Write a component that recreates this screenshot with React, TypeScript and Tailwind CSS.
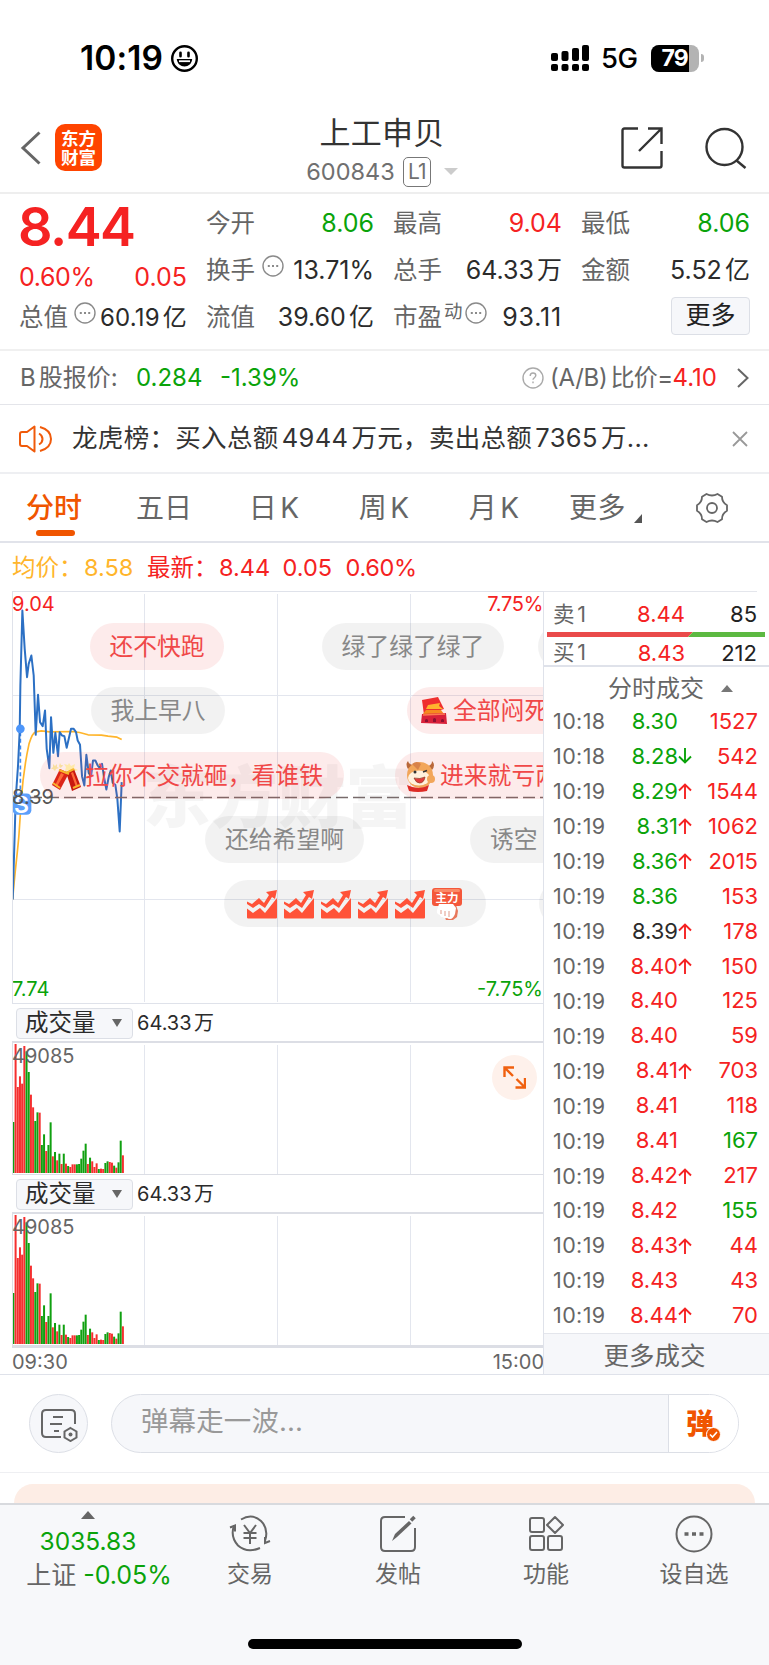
import type { ReactNode } from 'react'

const RED = 'text-[#f52222]'
const GREEN = 'text-[#0aa30a]'
const DARK = 'text-[#2b2b2b]'

const tabs = ['分时', '五日', '日K', '周K', '月K']

const trades = [
  { time: '10:18', price: '8.30', color: GREEN, dir: '', vol: '1527', volColor: RED },
  { time: '10:18', price: '8.28', color: GREEN, dir: 'down', vol: '542', volColor: RED },
  { time: '10:19', price: '8.29', color: GREEN, dir: 'up', vol: '1544', volColor: RED },
  { time: '10:19', price: '8.31', color: GREEN, dir: 'up', vol: '1062', volColor: RED },
  { time: '10:19', price: '8.36', color: GREEN, dir: 'up', vol: '2015', volColor: RED },
  { time: '10:19', price: '8.36', color: GREEN, dir: '', vol: '153', volColor: RED },
  { time: '10:19', price: '8.39', color: DARK, dir: 'up', vol: '178', volColor: RED },
  { time: '10:19', price: '8.40', color: RED, dir: 'up', vol: '150', volColor: RED },
  { time: '10:19', price: '8.40', color: RED, dir: '', vol: '125', volColor: RED },
  { time: '10:19', price: '8.40', color: RED, dir: '', vol: '59', volColor: RED },
  { time: '10:19', price: '8.41', color: RED, dir: 'up', vol: '703', volColor: RED },
  { time: '10:19', price: '8.41', color: RED, dir: '', vol: '118', volColor: RED },
  { time: '10:19', price: '8.41', color: RED, dir: '', vol: '167', volColor: GREEN },
  { time: '10:19', price: '8.42', color: RED, dir: 'up', vol: '217', volColor: RED },
  { time: '10:19', price: '8.42', color: RED, dir: '', vol: '155', volColor: GREEN },
  { time: '10:19', price: '8.43', color: RED, dir: 'up', vol: '44', volColor: RED },
  { time: '10:19', price: '8.43', color: RED, dir: '', vol: '43', volColor: RED },
  { time: '10:19', price: '8.44', color: RED, dir: 'up', vol: '70', volColor: RED },
]

// one entry per minute, r = up, g = down
const volumes =
  'g153 r387 r258 r290 r268 r381 g365 g303 r235 r197 g156 g182 r181 g84 g116 r66 g84 g152 r50 g63 r38 g58 r27 g58 r28 g21 r18 r26 r26 g26 g27 g43 g67 g88 r27 g46 r35 r18 r29 g12 r13 r12 g30 g35 r33 r31 g22 r16 g32 g97 r53'.split(' ')

const priceLine =
  '39,942 45,745 48,640 55,540 60,435 62,300 68,75 75,190 82,275 87,235 95,210 102,270 108,448 115,328 121,410 129,422 136,375 141,490 149,548 154,395 161,502 167,442 175,512 180,440 187,450 194,452 201,487 214,430 222,430 229,440 234,465 241,478 247,572 254,600 260,508 267,562 274,572 280,525 287,525 294,540 300,548 307,535 313,575 320,612 327,575 333,555 339,592 347,598 353,640 360,738 366,590'

const avgLine =
  'M39 942 C45 860 54 800 58 745 L65 640 C70 570 76 530 88 475 C94 455 100 441 108 439 L125 436 L150 439 L218 438 L240 441 L265 448 L305 449 L325 452 L352 455 L366 462'

function Dots() {
  return (
    <svg className="h-[22px] w-[22px] shrink-0" viewBox="0 0 22 22" fill="none" stroke="#8a8a8a" strokeWidth="1.4">
      <circle cx="11" cy="11" r="10" />
      <path d="M5.8 11h2M10 11h2M14.2 11h2" strokeWidth="2" />
    </svg>
  )
}

function StatusBar() {
  return (
    <div className="flex h-[116px] items-center pl-[80px] text-black">
      <span className="w-[91px] text-[33.5px] font-semibold tracking-[0.1px]">10:19</span>
      <svg className="h-[27px] w-[27px]" viewBox="0 0 27 27" fill="none" stroke="#000">
        <circle cx="13.5" cy="13.5" r="12.3" strokeWidth="2.4" />
        <path d="M9.5 7.8v3.4M17.5 7.8v3.4" strokeWidth="2.6" strokeLinecap="round" />
        <path d="M5.8 14h15.4c-.4 4.6-3.7 7.5-7.7 7.5S6.2 18.6 5.8 14z" fill="#000" stroke="none" />
        <path d="M8 16.2h11" strokeWidth="1.8" stroke="#fff" />
      </svg>
      <svg className="ml-[353px] h-[26px] w-[38px]" viewBox="0 0 38 26">
        <rect x="0" y="8" width="7" height="8" rx="2" />
        <rect x="10.5" y="6" width="7" height="10" rx="2" />
        <rect x="21" y="3" width="7" height="13" rx="2" />
        <rect x="31" y="0" width="7" height="16" rx="2" />
        <rect x="0" y="19" width="7" height="7" rx="2" />
        <rect x="10.5" y="19" width="7" height="7" rx="2" />
        <rect x="21" y="19" width="7" height="7" rx="2" />
        <rect x="31" y="19" width="7" height="7" rx="2" />
      </svg>
      <span className="ml-[12px] w-[50px] pt-[2px] text-[27.5px] font-medium tracking-[-0.4px]">5G</span>
      <div className="flex h-[27px] w-[48px] items-center overflow-hidden rounded-[8px] bg-[#b3b3b3]">
        <div className="flex h-full w-[38px] items-center justify-end bg-black pr-[1px] text-[23px] font-bold tracking-[-0.8px] text-white">79</div>
      </div>
      <div className="ml-[2px] h-[8px] w-[3px] rounded-r-full bg-[#b3b3b3]" />
    </div>
  )
}

function Header() {
  return (
    <div className="flex h-[78px] items-center border-b-2 border-[#eeeeee] pb-[13px] text-[#333]">
      <svg className="ml-[20px] h-[34px] w-[21px]" viewBox="0 0 21 34" fill="none" stroke="#666" strokeWidth="3">
        <path d="M19.5 1.5 3 17l16.5 15.5" />
      </svg>
      <div className="ml-[14px] flex h-[47px] w-[47px] flex-col items-center justify-center rounded-[10px] bg-[#ff4400] text-[17.5px] leading-[19px] font-bold text-white">
        <span>东方</span>
        <span>财富</span>
      </div>
      <div className="mt-[3px] ml-[199px] flex w-[162px] flex-col items-center">
        <div className="text-[31px] leading-[45px] tracking-[0.3px]">上工申贝</div>
        <div className="flex h-[34px] items-center text-[#707070]">
          <span className="text-[23.5px]">600843</span>
          <span className="ml-[8px] flex h-[30px] w-[28px] items-center justify-center rounded-[5px] border border-[#777] text-[21px] tracking-[-1px]">L1</span>
          <svg className="ml-[13px] h-[7px] w-[14px]" viewBox="0 0 14 7">
            <path d="M0 0h14L7 7z" fill="#ccc" />
          </svg>
        </div>
      </div>
      <svg className="ml-[158px] h-[42px] w-[42px]" viewBox="0 0 42 42" fill="none" stroke="#333" strokeWidth="2.4">
        <path d="M17 1.5H3.5Q1.5 1.5 1.5 3.5v35q0 2 2 2h35q2 0 2-2V24" />
        <path d="M27 1.5h13.5V17M40 2 18 24" />
      </svg>
      <svg className="ml-[42px] h-[42px] w-[42px]" viewBox="0 0 42 42" fill="none" stroke="#333" strokeWidth="2.4">
        <circle cx="19.5" cy="20" r="18" />
        <path d="m31.5 33.5 9 7.5" />
      </svg>
    </div>
  )
}

function Cell({ label, value, color, icon }: { label: string; value: string; color: string; icon?: ReactNode }) {
  return (
    <div className="flex h-[47px] items-center justify-between whitespace-nowrap">
      <span className="flex items-center text-[24.5px] text-[#666]">
        {label}
        {icon}
      </span>
      <span className={`pt-px text-[25px] ${color}`}>{value}</span>
    </div>
  )
}

function Quote() {
  return (
    <div className="grid h-[157px] grid-cols-[168px_168px_169px_169px] gap-x-[19px] border-b-2 border-[#f0f0f0] pt-[6px] pl-[19px]">
      <div>
        <div className={`ml-[-1px] flex h-[53px] items-center text-[54px] font-semibold tracking-[-1.5px] ${RED}`}>8.44</div>
        <div className={`flex h-[41px] items-center justify-between pt-[8px] text-[25px] ${RED}`}>
          <span className="tracking-[-0.4px]">0.60%</span>
          <span>0.05</span>
        </div>
        <div className="flex h-[47px] items-center justify-between whitespace-nowrap">
          <span className="flex items-center text-[24.5px] text-[#666]">
            总值
            <span className="mb-[10px] ml-[6px]"><Dots /></span>
          </span>
          <span className="pt-px text-[24px] tracking-[0.2px] text-[#2b2b2b]">60.19亿</span>
        </div>
      </div>
      <div>
        <Cell label="今开" value="8.06" color={GREEN} />
        <Cell label="换手" value="13.71%" color={DARK} icon={<span className="mb-[10px] ml-[7px]"><Dots /></span>} />
        <Cell label="流值" value="39.60亿" color={DARK} />
      </div>
      <div>
        <Cell label="最高" value="9.04" color={RED} />
        <Cell label="总手" value="64.33万" color={DARK} />
        <Cell
          label="市盈"
          value="93.11"
          color={`${DARK} tracking-[0.8px]`}
          icon={
            <span className="mb-[12px] ml-[2px] flex items-center text-[18.5px]">
              动<span className="ml-[2px] pt-[3px]"><Dots /></span>
            </span>
          }
        />
      </div>
      <div>
        <Cell label="最低" value="8.06" color={GREEN} />
        <Cell label="金额" value="5.52亿" color={DARK} />
        <button className="mt-[3px] ml-auto flex h-[38px] w-[79px] items-center justify-center rounded-[4px] border border-[#dcdfe6] bg-[#f6f7fa] text-[25px] text-[#222]">更多</button>
      </div>
    </div>
  )
}

function BShare() {
  return (
    <div className="flex h-[54px] items-center border-b border-[#e4e5ea] pr-[20px] pl-[20px] text-[24px] whitespace-nowrap text-[#666]">
      <span className="w-[116px]">B股报价:</span>
      <span className={`w-[84px] ${GREEN}`}>0.284</span>
      <span className={GREEN}>-1.39%</span>
      <svg className="ml-auto h-[22px] w-[22px]" viewBox="0 0 22 22" fill="none" stroke="#aaa" strokeWidth="1.4">
        <circle cx="11" cy="11" r="10" />
        <path d="M8.2 9q0-3 2.8-3t2.8 2.6c0 2-2.8 2.2-2.8 4.2M11 14.5v1.8" />
      </svg>
      <span className="ml-[6px] tracking-[-0.3px]">(A/B)</span>
      <span className="ml-[3px] tracking-[-0.6px]">比价=</span>
      <span className={RED}>4.10</span>
      <svg className="ml-[20px] h-[20px] w-[12px]" viewBox="0 0 12 20" fill="none" stroke="#666" strokeWidth="2">
        <path d="m1 1 9.5 9L1 19" />
      </svg>
    </div>
  )
}

function Notice() {
  return (
    <div className="flex h-[69px] items-center border-b-2 border-[#eeeff2] pl-[19px]">
      <svg className="h-[28px] w-[34px]" viewBox="0 0 34 28" fill="none" stroke="#f05a0a" strokeWidth="2">
        <path d="M15.5 1.5v25L8 21H3q-2 0-2-2V9q0-2 2-2h5z" strokeLinejoin="round" />
        <path d="M20 8.5q3.5 2 3.5 5.5t-3.5 5.5M21 2q11 3 11 12T21 26" />
      </svg>
      <div className="ml-[19px] w-[600px] text-[25.5px] tracking-[0.32px] whitespace-nowrap text-[#333]">龙虎榜：买入总额4944万元，卖出总额7365万...</div>
      <svg className="ml-[60px] h-[16px] w-[16px]" viewBox="0 0 16 16" fill="none" stroke="#999" strokeWidth="1.8">
        <path d="m1 1 14 14M15 1 1 15" />
      </svg>
    </div>
  )
}

function Tabs() {
  return (
    <div className="flex h-[69px] border-b-2 border-[#e1e3ea] text-[28px] text-[#666]">
      {tabs.map((tab, i) => (
        <div key={tab} className={`flex w-[110px] flex-col items-center pr-[2px] ${i === 0 ? 'font-medium text-[#f05500]' : ''}`}>
          <span className="flex h-[56px] items-center pt-[12px]">{tab}</span>
          {i === 0 && <span className="ml-[2px] h-[6px] w-[39px] rounded-full bg-[#f05500]" />}
        </div>
      ))}
      <div className="ml-[19px] flex h-[56px] w-[58px] items-center pt-[12px] whitespace-nowrap tracking-[0.5px]">更多</div>
      <svg className="mt-[40px] ml-[7px] h-[9px] w-[8px]" viewBox="0 0 8 9">
        <path d="M8 0v9H0z" fill="#555" />
      </svg>
      <svg className="mt-[18px] ml-[53px] h-[32px] w-[34px]" viewBox="0 0 34 32" fill="none" stroke="#666" strokeWidth="1.8" strokeLinejoin="round">
        <path d="M11.5 2Q17 5 22.5 2L27 4.8Q27 10.5 32 13.2v5.6Q27 21.5 27 27.2L22.5 30Q17 27 11.5 30L7 27.2Q7 21.5 2 18.8v-5.6Q7 10.5 7 4.8z" />
        <circle cx="17" cy="16" r="5" />
      </svg>
    </div>
  )
}

function Firecracker() {
  return (
    <svg className="h-[32px] w-[32px]" viewBox="0 0 32 32">
      <path d="m19 3 2 3 4-2-1 4 4 2-5 2-4-2-4 1 1-4-2-3 4 1z" fill="#ffe9a8" />
      <path d="m3 4 2 2 2-2v3l2 1-3 1-1 2-2-2-2 0 2-2zm7-1 1 2 2 0-1 2-2 1-1-2z" fill="#f8dfa0" />
      <path d="m10 9 9 4-9 17-8-5z" fill="#dc2418" />
      <path d="m16 12 8-3 7 18-9 4z" fill="#c8180f" />
      <path d="m11 13 3 1.5-7 12-2-1zm10 0 2-1 5 14-2 1z" fill="#ff6a3a" />
      <path d="m9 10 10 4M3 23l7 5M23 28l7-3M16 13l8-4" stroke="#f7b52c" strokeWidth="2" />
    </svg>
  )
}

function Palace() {
  return (
    <svg className="h-[28px] w-[28px]" viewBox="0 0 28 28">
      <path d="M2 3 18 0l6 12-20 6z" fill="#ef2f2f" />
      <path d="m8 8 12-2-1 3 4 3H6z" fill="#ffb52e" />
      <path d="m6 13 15 0 3 4H3z" fill="#f58a1f" />
      <path d="m2 17 24-1 1 11-26-1z" fill="#d8213a" />
      <path d="M5 25v-2q1.5-2 3 0v2zm8 0v-3q1.5-2 3 0v3zm8 0v-2q1.5-2 3 0v2z" fill="#8e1030" />
      <path d="m3 18 22-1" stroke="#ff7a50" strokeWidth="1.5" />
    </svg>
  )
}

function Cow() {
  return (
    <svg className="h-[32px] w-[32px]" viewBox="0 0 32 32">
      <path d="M4 9Q1 4 4 1q1 4 6 4zM24 6q4-1 4-5 4 4 0 9z" fill="#b9683a" />
      <circle cx="16" cy="15" r="13" fill="#f2a65a" />
      <path d="M8 4q5-4 9 0l-3 6z" fill="#d8824a" />
      <ellipse cx="15" cy="18" rx="11" ry="7.5" fill="#fff1dc" />
      <circle cx="11" cy="12" r="1.5" fill="#333" />
      <path d="m19 12 4-1.5" stroke="#333" strokeWidth="1.5" />
      <path d="M10 18q6 1.500 11-1-1 6-5.500 6-3.500 0-5.500-5z" fill="#e23b3b" stroke="#8a3b22" strokeWidth=".7" />
      <path d="M3 25q12 6 22 0l-2 6q-9 2-18 0z" fill="#dd2a25" />
      <circle cx="27" cy="19" r="4" fill="#f2a65a" />
    </svg>
  )
}

function Uptrend() {
  return (
    <svg className="h-[30px] w-[30px]" viewBox="0 0 30 30" fill="#ff5238">
      <path d="M0 19.5 6 24l7-5 5 5 12-15v19.5q0 1-1 1H1q-1 0-1-1z" />
      <path d="M0 12.5 5 15l7-6 5 5 5-8-3-3L30 1l-2 9-3-2-7 11-6-4-6 4-6-4z" />
    </svg>
  )
}

function MainForce() {
  return (
    <svg className="h-[32px] w-[30px]" viewBox="0 0 30 32">
      <path d="M7 17h17l2 6-1 6-4 3h-7l-1-2z" fill="#e8785c" />
      <rect x="0" y="0" width="30" height="18" rx="3" fill="#f4573a" />
      <rect x="2" y="1" width="26" height="3" rx="1.5" fill="#fa8a66" />
      <path d="M7 16h14l3 4-1 6q-2 5-5 5-2 0-3-1-3 1-4-1-3 0-3-2-4-1-3-5z" fill="#fff" />
      <path d="M9 26v-4M13 28v-5M17 29v-6" stroke="#d9806c" strokeWidth=".8" />
      <text x="15" y="13.5" textAnchor="middle" fontSize="11.5" fontWeight="700" fill="#fff">主力</text>
    </svg>
  )
}

function Pill({ className, red, children }: { className: string; red?: boolean; children?: ReactNode }) {
  return (
    <div
      className={`absolute flex h-[47px] items-center rounded-full text-[23.8px] whitespace-nowrap ${
        red ? 'bg-[#f03c3c]/10 text-[#f04848]' : 'bg-black/5 text-[#888]'
      } ${className}`}
    >
      {children}
    </div>
  )
}

function PriceChart() {
  return (
    <div className="relative h-[413px] overflow-hidden border-t border-b border-l border-[#dfe2ea] text-[20px] leading-none">
      <svg className="absolute top-0 left-0" width="532" height="412" viewBox="0 0 532 412" fill="none">
        <path d="M131.500 2v408M264.500 2v408M397.500 2v408M0 103.500h532M0 307.500h532" stroke="#e3e6ee" />
        <text x="130" y="230" fontSize="67.5" fontWeight="900" fill="#000" opacity=".035">东方财富</text>
        <g transform="translate(-13.3 -6.5) scale(.3333)" strokeLinejoin="round">
          <path d={avgLine} stroke="#ffb52b" strokeWidth="5" />
          <path d="M62 440v190" stroke="#3d8bf5" strokeWidth="5" strokeDasharray="12 8" />
          <polyline points={priceLine} stroke="#2c70c4" strokeWidth="6" />
          <circle cx="62" cy="430" r="13" fill="#4c95fa" />
          <rect x="39" y="624" width="56" height="64" rx="14" fill="#5b9ffb" />
        </g>
        <path d="M0 205.5h532" stroke="#776b6b" strokeWidth="1.6" strokeDasharray="12 5" />
        <text x="1" y="221" fontSize="23" fontWeight="600" fill="#fff">S</text>
      </svg>
      <span className="absolute top-[2px] left-[-1px] text-[#f52222]">9.04</span>
      <span className="absolute top-[195px] left-[-1px] text-[#555]">8.39</span>
      <span className="absolute bottom-[4px] left-[-1px] text-[#0aa30a]">7.74</span>
      <span className="absolute top-[2px] right-0 tracking-[-0.3px] text-[#f52222]">7.75%</span>
      <span className="absolute right-0 bottom-[4px] text-[#0aa30a]">-7.75%</span>

      <Pill red className="top-[31px] left-[77px] w-[134px] justify-center">还不快跑</Pill>
      <Pill className="top-[31px] left-[309px] w-[182px] justify-center">绿了绿了绿了</Pill>
      <Pill className="top-[31px] left-[525px] w-[60px]" />
      <Pill className="top-[95px] left-[78px] w-[134px] justify-center">我上早八</Pill>
      <Pill red className="top-[95px] left-[394px] w-[170px] gap-[5px] pl-[13px]"><Palace />全部闷死</Pill>
      <Pill red className="top-[160px] left-[27px] w-[304px] gap-[3px] pl-[10px]"><Firecracker />拉你不交就砸，看谁铁</Pill>
      <Pill red className="top-[160px] left-[382px] w-[200px] gap-[4px] pl-[9px]"><Cow />进来就亏两</Pill>
      <Pill className="top-[224px] left-[192px] w-[159px] justify-center">还给希望啊</Pill>
      <Pill className="top-[224px] left-[457px] w-[100px] pl-[20px]">诱空</Pill>
      <Pill className="top-[288px] left-[211px] w-[262px] gap-[7px] pl-[23px]">
        {[0, 1, 2, 3, 4].map((i) => (
          <Uptrend key={i} />
        ))}
        <MainForce />
      </Pill>
      <Pill className="top-[288px] left-[526px] w-[60px]" />
    </div>
  )
}

function VolumeChart({ expandable }: { expandable?: boolean }) {
  return (
    <>
      <div className="flex h-[37px] items-center pt-px pl-[4px] text-[#2b2b2b]">
        <div className="flex h-[31px] w-[117px] items-center justify-between rounded-[4px] border border-[#dcdfe6] bg-[#f6f7fa] pr-[10px] pl-[8px] text-[23.5px]">
          成交量
          <svg className="h-[8px] w-[10px]" viewBox="0 0 10 8">
            <path d="M0 0h10L5 8z" fill="#666" />
          </svg>
        </div>
        <span className="ml-[4px] text-[20px]">64.33万</span>
      </div>
      <div className="relative h-[134px] border-t-2 border-b border-l border-[#dcdee5]">
        <svg width="531" height="131" viewBox="0 0 531 131">
          <path d="M131.500 2v129M264.500 2v129M397.500 2v129" stroke="#e3e6ee" />
          {volumes.map((v, i) => (
            <rect
              key={i}
              x={i * 2.19 - 0.6}
              y={130 - Number(v.slice(1)) / 3}
              width="2"
              height={Number(v.slice(1)) / 3}
              fill={v[0] === 'r' ? '#f52f2f' : '#10a010'}
            />
          ))}
        </svg>
        <span className="absolute top-px left-[-1px] text-[20px] leading-[24px] text-[#666]">49085</span>
        {expandable && (
          <div className="absolute top-[12px] right-[6px] flex h-[45px] w-[45px] items-center justify-center rounded-full bg-[#fef1eb]">
            <svg className="h-[23px] w-[23px]" viewBox="0 0 23 23" fill="none" stroke="#f0600f" strokeWidth="2.4">
              <path d="M1.5 11V1.5H11M1.5 1.5l8.5 8.5M12.5 21.5H22V12M22 21.5 13.5 13" />
            </svg>
          </div>
        )}
      </div>
    </>
  )
}

function Arrow({ dir }: { dir: string }) {
  return (
    <svg className="h-[16px] w-[14px]" viewBox="0 0 14 16" fill="none" strokeWidth="1.9" stroke={dir === 'up' ? '#f52222' : '#0aa30a'}>
      {dir === 'up' && <path d="M7 16V1.5M1 7.5l6-6 6 6" />}
      {dir === 'down' && <path d="M7 0v14.5M1 8.5l6 6 6-6" />}
    </svg>
  )
}

function OrderPanel() {
  return (
    <div className="flex w-[226px] flex-col border-l border-[#dfe2ea] text-[21.5px] text-[#666]">
      <div className="mr-[12px] flex h-[41px] shrink-0 items-center border-t border-[#e4e6ec] pt-[4px] pl-[9px]">
        <span className="w-[60px]">卖1</span>
        <span className="w-[72px] text-right text-[22px] text-[#f52222]">8.44</span>
        <span className="ml-auto text-[22px] text-[#222]">85</span>
      </div>
      <svg className="ml-[3px] h-[5px] w-[218px] shrink-0" viewBox="0 0 218 5">
        <path d="M0 0h146l-5 5H0z" fill="#ea4a4a" />
        <path d="M146 0h72v5h-77z" fill="#5cb941" />
      </svg>
      <div className="flex h-[30px] shrink-0 items-center border-b-2 border-[#dfe2ea] pt-[4px] pr-[12px] pl-[9px] leading-none">
        <span className="w-[60px]">买1</span>
        <span className="w-[72px] text-right text-[22px] text-[#f52222]">8.43</span>
        <span className="ml-auto text-[22px] text-[#222]">212</span>
      </div>
      <div className="flex h-[37px] shrink-0 items-center pt-[6px] pl-[64px] text-[24px] leading-none">
        分时成交
        <svg className="ml-[17px] h-[7px] w-[12px]" viewBox="0 0 12 7">
          <path d="M6 0l6 7H0z" fill="#777" />
        </svg>
      </div>
      {trades.map((t, i) => (
        <div key={i} className="flex h-[34.94px] shrink-0 items-center pr-[11px] pl-[9px]">
          <span className="w-[60px] tracking-[0.4px]">{t.time}</span>
          <span className={`w-[65px] text-right text-[22px] ${t.color}`}>{t.price}</span>
          <Arrow dir={t.dir} />
          <span className={`ml-auto text-[22px] ${t.volColor}`}>{t.vol}</span>
        </div>
      ))}
      <div className="flex flex-1 items-center justify-center border-t border-[#e4e6ec] bg-[#f6f7fa] pt-[4px] pr-[4px] text-[25.5px] leading-none">更多成交</div>
    </div>
  )
}

function ChartSection() {
  return (
    <>
      <div className="flex h-[48px] items-center pt-px pl-[12px] text-[23.5px] whitespace-nowrap text-[#f52222]">
        <span className="w-[72px] text-[#ffb52b]">均价：</span>
        <span className="w-[63px] text-[#ffb52b]">8.58</span>
        <span className="w-[72px]">最新：</span>
        <span className="w-[63.5px]">8.44</span>
        <span className="w-[63px]">0.05</span>
        <span className="tracking-[-0.3px]">0.60%</span>
      </div>
      <div className="flex h-[784px] border-b border-[#dfe2ea]">
        <div className="w-[543px] pl-[12px]">
          <PriceChart />
          <VolumeChart expandable />
          <VolumeChart />
          <div className="mr-[-1px] flex h-[29px] items-center justify-between border-t-2 border-[#dcdee5] pt-px text-[20px] text-[#666]">
            <span>09:30</span>
            <span>15:00</span>
          </div>
        </div>
        <OrderPanel />
      </div>
    </>
  )
}

function DanmakuInput() {
  return (
    <div className="flex h-[98px] items-center border-b border-[#eeeff2] pl-[29px]">
      <div className="flex h-[59px] w-[59px] items-center justify-center rounded-full border border-[#dcdfe6] bg-[#f6f7fa]">
        <svg className="mt-[3px] ml-px h-[33px] w-[37px]" viewBox="0 0 37 33" fill="none" stroke="#666" strokeWidth="2">
          <path d="M20 28H5q-4 0-4-4V5q0-4 4-4h25q4 0 4 4v10" />
          <path d="M12 8h10M9 15h12M13 22h5" />
          <path d="m29.5 19 6 3.5v6l-6 3.5-6-3.5v-6z" />
          <circle cx="29.5" cy="25.5" r="2" fill="#666" stroke="none" />
        </svg>
      </div>
      <div className="ml-[23px] flex h-[59px] w-[628px] overflow-hidden rounded-full border border-[#dcdfe6] bg-[#f6f7fa]">
        <div className="flex-1 pt-[6px] pl-[29px] text-[27.5px] leading-[40px] tracking-[0.1px] text-[#999]">弹幕走一波...</div>
        <div className="relative flex w-[70px] items-center border-l border-[#dcdfe6] bg-white pl-[17px] text-[28px] font-black text-[#f05500]">
          弹
          <svg className="absolute top-[32px] left-[37px] h-[15px] w-[15px]" viewBox="0 0 15 15" fill="none">
            <circle cx="7.5" cy="7.5" r="7" fill="#f05500" stroke="#fff" />
            <path d="m4 7.5 2.5 2.5L11 5" stroke="#fff" strokeWidth="1.6" />
          </svg>
        </div>
      </div>
    </div>
  )
}

function NavItem({ label, children }: { label: string; children: ReactNode }) {
  return (
    <div className="flex w-[148px] flex-col items-center pt-[10px]">
      <svg className="h-[38px] w-[42px]" viewBox="0 0 42 38" fill="none" stroke="#666" strokeWidth="2">
        {children}
      </svg>
      <span className="mt-[5px] text-[23px] leading-[32px]">{label}</span>
    </div>
  )
}

function BottomNav() {
  return (
    <div className="h-[162px] border-t-2 border-[#d8dade] bg-[#f7f8fa] text-[#666]">
      <div className="flex h-[134px]">
        <div className="flex w-[176px] flex-col items-center pt-[6px]">
          <svg className="h-[8px] w-[14px]" viewBox="0 0 14 8">
            <path d="M7 0l7 8H0z" fill="#666" />
          </svg>
          <span className="mt-[5px] text-[24.5px] leading-[34px] text-[#0aa30a]">3035.83</span>
          <span className="flex gap-[7px] pl-[22px] text-[25px] leading-[34px]">
            上证<span className="text-[#0aa30a]">-0.05%</span>
          </span>
        </div>
        <NavItem label="交易">
          <path d="M12 4.5Q23-2 32 6q8 8 4 20M5 10.5q-4 11 4 20 9 8 22 2.5" />
          <path d="M1 12.5l5-2v6M41 26l-5 2v-6" />
          <path d="m15 10 6 8 6-8M14.5 18h13M14.5 23h13M21 18v11" />
        </NavItem>
        <NavItem label="发帖">
          <path d="M28 2H8Q4 2 4 6v26q0 4 4 4h26q4 0 4-4V13" />
          <path d="m15 26 3-7L32 6l2.5 2.5L20 22z" fill="#666" stroke="none" />
          <path d="m34 5.5 3.5-3.5" strokeWidth="3.5" />
        </NavItem>
        <NavItem label="功能">
          <rect x="5" y="3" width="14" height="14" rx="2" />
          <rect x="5" y="21" width="14" height="14" rx="2" />
          <rect x="23" y="21" width="14" height="14" rx="2" />
          <path d="m30 2 8 8-8 8-8-8z" strokeLinejoin="round" />
        </NavItem>
        <NavItem label="设自选">
          <circle cx="21" cy="19" r="17.5" />
          <path d="M11.5 19h4M19 19h4M26.5 19h4" strokeWidth="3.5" />
        </NavItem>
      </div>
      <div className="mx-auto h-[10px] w-[274px] rounded-full bg-black" />
    </div>
  )
}

export default function App() {
  return (
    <div className="h-[1665px] w-[769px] overflow-hidden bg-white font-['Inter','Noto_Sans_CJK_SC',sans-serif] [text-autospace:normal]">
      <StatusBar />
      <Header />
      <Quote />
      <BShare />
      <Notice />
      <Tabs />
      <ChartSection />
      <DanmakuInput />
      <div className="mx-[14px] mt-[11px] h-[19px] rounded-t-[26px] bg-[#fdede5]" />
      <BottomNav />
    </div>
  )
}
